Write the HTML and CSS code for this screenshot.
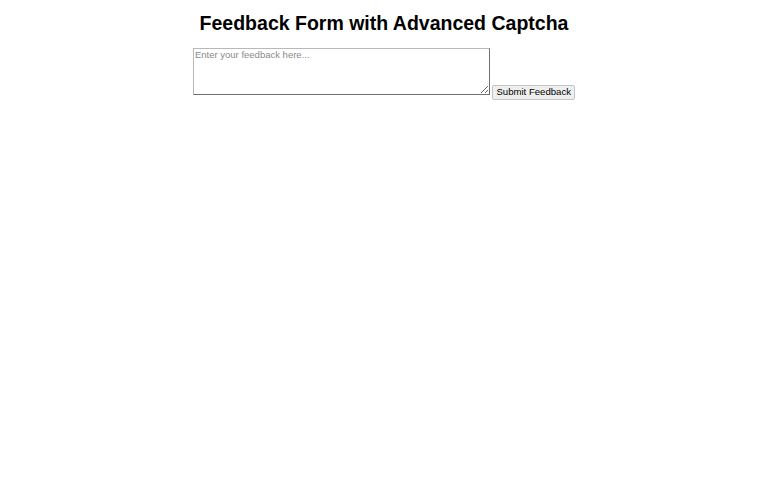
FILE: index.html
```html
<!DOCTYPE html>
<html lang="en">
<head>
<meta charset="utf-8">
<title>Feedback Form with Advanced Captcha</title>
<link rel="stylesheet" href="styles.css">
</head>
<body>
<h1 class="title">Feedback Form with Advanced Captcha</h1>
<form class="feedback-form">
<textarea class="feedback-input" placeholder="Enter your feedback here..."></textarea>
<button type="submit" class="submit-btn">Submit Feedback</button>
</form>
</body>
</html>
```
FILE: styles.css
```css
html, body {
  margin: 0;
  padding: 0;
  background: #ffffff;
}

body {
  font-family: "Liberation Sans", Arial, sans-serif;
  color: #000000;
  text-align: center;
}

.title {
  font-size: 19.5px;
  font-weight: bold;
  line-height: 24px;
  margin: 11px 0 13px;
}

.feedback-form {
  margin: 0;
}

.feedback-input {
  box-sizing: border-box;
  width: 297px;
  height: 47px;
  margin: 0;
  padding: 0 1px;
  font-family: "Liberation Sans", Arial, sans-serif;
  font-size: 9.5px;
  border-width: 1px;
  border-style: solid;
  border-color: #b8b8b8 #6f6f6f #6f6f6f #b8b8b8;
  vertical-align: baseline;
}

.feedback-input::placeholder {
  color: #8a8a8a;
}

.submit-btn {
  box-sizing: border-box;
  height: 15px;
  margin: 0 0 0 -2px;
  padding: 0 3px 1px;
  font-family: "Liberation Sans", Arial, sans-serif;
  font-size: 9.6px;
  line-height: 12px;
  color: #000000;
  background: #efefef;
  border: 1px solid #c4c4c4;
  border-radius: 2px;
}
```
